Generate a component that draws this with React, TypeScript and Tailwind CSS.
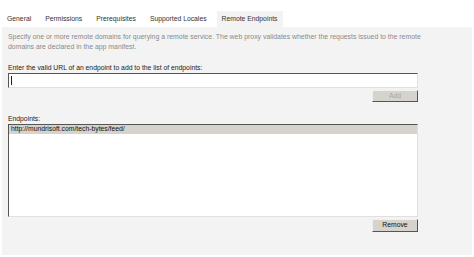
import React from "react";

const tabs = ["General", "Permissions", "Prerequisites", "Supported Locales", "Remote Endpoints"];

export default function App() {
  return (
    <div
      className="w-[474px] h-[257px] bg-white overflow-hidden"
      style={{ fontFamily: '"Liberation Sans", Arial, sans-serif' }}
    >
      <div className="flex h-[27px] items-end pl-[3px] text-[6.8px] text-[#333]">
        {tabs.map((t, i) => {
          const active = i === tabs.length - 1;
          return (
            <div
              key={t}
              className={
                active
                  ? "h-[16px] flex items-center pl-[5px] pr-[6px] bg-[#f3f3f3]"
                  : "h-[16px] flex items-center px-[4px] mr-[6px]"
              }
            >
              {t}
            </div>
          );
        })}
      </div>
      <div className="ml-[2px] w-[470px] h-[228px] bg-[#f3f3f3] pl-[6px] pt-[5px] flex flex-col">
        <p className="text-[6.9px] leading-[10px] text-[#8a8a8a] w-[420px]">
          Specify one or more remote domains for querying a remote service. The web proxy validates whether the requests issued to the remote domains are declared in the app manifest.
        </p>
        <div className="mt-[12px] text-[6.8px] leading-[8px] text-[#222]">
          Enter the valid URL of an endpoint to add to the list of endpoints:
        </div>
        <div className="mt-[1px] w-[410px] h-[15px] bg-white border-t border-l border-t-[#555] border-l-[#555] border-r border-b border-r-[#e0e0e0] border-b-[#e0e0e0] flex items-center pl-[2px]">
          <div className="w-[1px] h-[9px] bg-[#222]" />
        </div>
        <div className="w-[410px] flex justify-end mt-[2px]">
          <div className="w-[46px] h-[12px] bg-[#d6d3cc] border-r border-b border-r-[#555] border-b-[#555] border-t border-l border-t-[#f0f0f0] border-l-[#f0f0f0] flex items-center justify-center text-[6.8px] text-[#a8a8a8]">
            Add
          </div>
        </div>
        <div className="mt-[13px] text-[6.8px] leading-[8px] text-[#222]">Endpoints:</div>
        <div className="mt-[1px] w-[410px] h-[93px] bg-white border-t border-l border-t-[#555] border-l-[#555] border-r border-b border-r-[#e0e0e0] border-b-[#e0e0e0]">
          <div className="h-[9px] bg-[#d6d3cc] flex items-center pl-[2px] text-[6.8px] text-[#111]">
            http://mundrisoft.com/tech-bytes/feed/
          </div>
        </div>
        <div className="w-[410px] flex justify-end mt-[2px]">
          <div className="w-[46px] h-[13px] bg-[#d6d3cc] border-r border-b border-r-[#555] border-b-[#555] border-t border-l border-t-[#f0f0f0] border-l-[#f0f0f0] flex items-center justify-center text-[6.8px] text-[#111]">
            Remove
          </div>
        </div>
      </div>
    </div>
  );
}
